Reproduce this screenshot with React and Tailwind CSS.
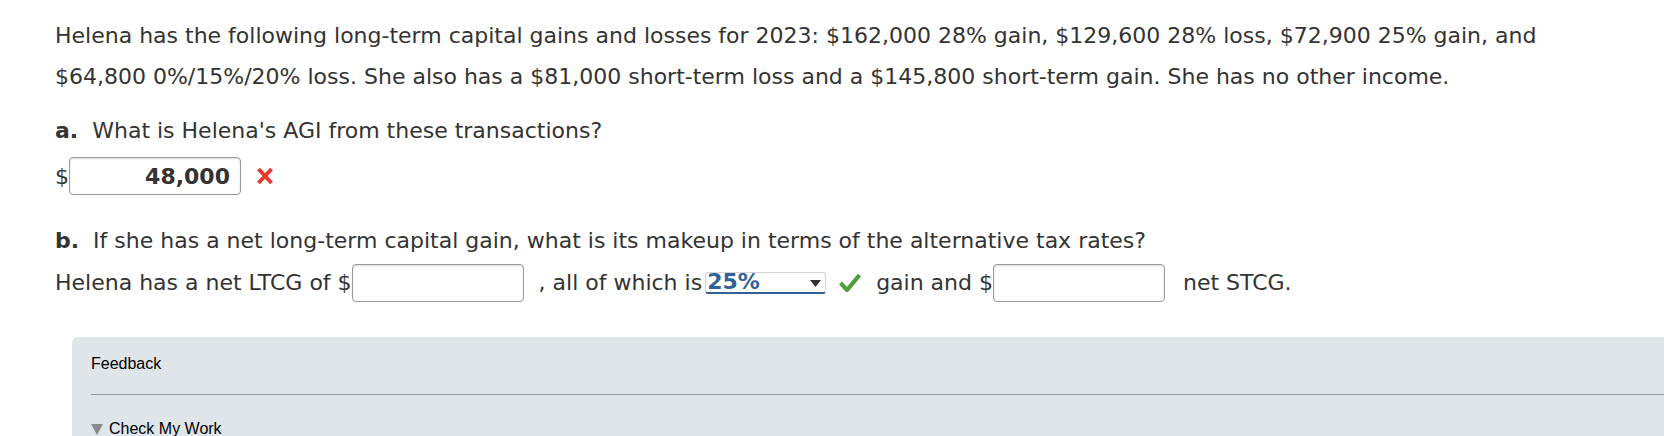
const body = "font-['DejaVu_Sans',Verdana,sans-serif] text-[22px] text-[#333]"

function Field({ value, className = '' }) {
  return (
    <span
      className={`inline-flex items-center justify-end h-[38px] w-[172px] rounded-[4px] border border-[#9a9a9a] bg-white pr-[10px] shadow-[inset_0_1px_2px_rgba(0,0,0,0.15)] font-bold text-[#333] ${className}`}
    >
      {value}
    </span>
  )
}

export default function App() {
  return (
    <div className={`w-[1664px] h-[436px] overflow-hidden bg-white ${body}`}>
      <div className="pl-[55px] pt-[15px]">
        <p className="leading-[41px]">
          Helena has the following long-term capital gains and losses for 2023: $162,000 28% gain, $129,600 28% loss, $72,900 25% gain, and
          <br />
          $64,800 0%/15%/20% loss. She also has a $81,000 short-term loss and a $145,800 short-term gain. She has no other income.
        </p>

        <p className="mt-[13px] leading-[41px]">
          <span className="font-bold mr-[14px]">a.</span>What is Helena's AGI from these transactions?
        </p>
        <div className="flex items-center h-[38px] mt-[6px]">
          <span>$</span>
          <Field value="48,000" />
          <svg className="ml-[15px]" width="18" height="18" viewBox="0 0 18 18">
            <path d="M2.5 2 L15.5 16 M15.5 2 L2.5 16" stroke="#e8392f" strokeWidth="4" strokeLinecap="butt" />
          </svg>
        </div>

        <p className="mt-[25px] leading-[41px]">
          <span className="font-bold mr-[14px]">b.</span>If she has a net long-term capital gain, what is its makeup in terms of the alternative tax rates?
        </p>
        <div className="flex items-center h-[39px] mt-[2px]">
          <span>Helena has a net LTCG of $</span>
          <Field value="" />
          <span className="ml-[15px]">, all of which is</span>
          <span className="relative ml-[3px] flex items-center h-[22px] w-[121px] rounded-[3px] border border-[#d4d4d4] border-b-[2px] border-b-[#2f6296] bg-white pl-[1px]">
            <span className="font-bold text-[#2f6296] leading-none">25%</span>
            <svg className="absolute right-[4px] top-[7px]" width="11" height="7" viewBox="0 0 11 7">
              <path d="M0 0 H11 L5.5 7 Z" fill="#333" />
            </svg>
          </span>
          <svg className="ml-[13px]" width="22" height="19" viewBox="0 0 22 19">
            <path d="M1.5 10 L8 17 L20.5 2" fill="none" stroke="#4f9f3c" strokeWidth="4.2" />
          </svg>
          <span className="ml-[15px]">gain and $</span>
          <Field value="" />
          <span className="ml-[18px]">net STCG.</span>
        </div>
      </div>

      <div className="ml-[72px] mt-[35px] rounded-tl-[6px] bg-[#dfe5e8] pl-[19px] font-['Liberation_Sans',Arial,sans-serif] text-[16px] text-black">
        <div className="pt-[17px] pb-[20px] leading-[20px]">Feedback</div>
        <div className="border-t border-[#999]" />
        <div className="flex items-center pt-[24px] leading-[20px]">
          <svg width="12" height="12" viewBox="0 0 12 12">
            <path d="M0 1 H12 L6 12 Z" fill="#8a8a8a" />
          </svg>
          <span className="ml-[6px]">Check My Work</span>
        </div>
      </div>
    </div>
  )
}
